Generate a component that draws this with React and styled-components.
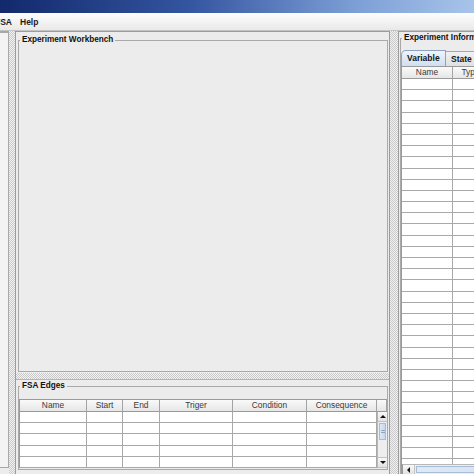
import React from "react";
import styled, { createGlobalStyle } from "styled-components";

const GlobalStyle = createGlobalStyle`
  html, body {
    margin: 0;
    padding: 0;
    background: #ececec;
  }
  body {
    font-family: "Liberation Sans", Arial, sans-serif;
  }
`;

const EDGE_COLS = "67px 36px 37px 73px 74px 70px";
const VAR_COLS = "51px 36px 60px";

const Window = styled.div`
  width: 474px;
  height: 474px;
  overflow: hidden;
  display: flex;
  flex-direction: column;
  background: #ececec;
`;

const TitleBar = styled.div`
  flex: none;
  height: 13px;
  background: linear-gradient(90deg, #12296c 0%, #3455a0 40%, #7d9fd6 75%, #a8c4ea 100%);
`;

const MenuBar = styled.div`
  flex: none;
  height: 17px;
  display: flex;
  align-items: center;
  background: linear-gradient(#fdfdfd, #e9e9e9);
  border-bottom: 1px solid #c4c4c4;
`;

const MenuItem = styled.span`
  padding: 0 4px;
  margin-left: ${(p) => (p.$first ? "-9px" : "0")};
  font-size: 8.5px;
  font-weight: bold;
  color: #1c1c1c;
`;

const Body = styled.div`
  flex: 1;
  min-height: 0;
  display: flex;
`;

const LeftPane = styled.div`
  flex: none;
  width: 9px;
  border-top: 1px solid #a6a6a6;
  padding-bottom: 6px;
  display: flex;
  flex-direction: column;
`;

const LeftBox = styled.div`
  flex: 1;
  box-sizing: border-box;
  background: #f3f3f3;
  border-top: 1px solid #a8a8a8;
  border-right: 1px solid #a8a8a8;
  border-bottom: 1px solid #a8a8a8;
`;

const VDivider = styled.div`
  flex: none;
  width: ${(p) => p.$w}px;
  background: repeating-conic-gradient(#c9c9c9 0 25%, #f2f2f2 0 50%) 0 0 / 2px 2px;
`;

const HDivider = styled.div`
  flex: none;
  height: 6px;
  background: repeating-conic-gradient(#c9c9c9 0 25%, #f2f2f2 0 50%) 0 0 / 2px 2px;
`;

const CenterColumn = styled.div`
  flex: none;
  width: 375px;
  box-sizing: border-box;
  border: 1px solid #9c9c9c;
  border-bottom: none;
  display: flex;
  flex-direction: column;
`;

const Panel = styled.div`
  flex: ${(p) => (p.$grow ? 1 : "none")};
  height: ${(p) => (p.$h ? `${p.$h}px` : "auto")};
  min-height: 0;
  box-sizing: border-box;
  padding: ${(p) => p.$pad};
  border-top: ${(p) => (p.$line ? "1px solid #b4b4b4" : "none")};
  display: flex;
  flex-direction: column;
  overflow: hidden;
`;

const Frame = styled.fieldset`
  margin: 0;
  min-width: 0;
  box-sizing: border-box;
  flex: ${(p) => (p.$grow ? 1 : "none")};
  width: ${(p) => (p.$w ? `${p.$w}px` : "auto")};
  padding: ${(p) => p.$pad || "0"};
  border: 1px solid #a9a9a9;
  background: ${(p) => p.$bg || "transparent"};
`;

const Legend = styled.legend`
  padding: 0 2px;
  margin-left: 1px;
  font-size: 8.2px;
  line-height: 10px;
  font-weight: bold;
  color: #111;
  white-space: nowrap;
`;

const ScrollPane = styled.div`
  height: ${(p) => p.$h}px;
  display: flex;
  flex-direction: column;
  border-left: 1px solid #9a9a9a;
  background: #ffffff;
  overflow: hidden;
`;

const HeaderRow = styled.div`
  flex: none;
  display: grid;
  grid-template-columns: ${(p) => p.$cols};
  height: 12px;
  border-top: 1px solid #9a9a9a;
  background: linear-gradient(#fafafa, #e4e4e4);
`;

const HeaderCell = styled.div`
  box-sizing: border-box;
  border-right: 1px solid #a3a3a3;
  border-bottom: 1px solid #9a9a9a;
  font-size: 8.4px;
  line-height: 11px;
  text-align: center;
  color: #3a3a3a;
  white-space: nowrap;
  overflow: hidden;
`;

const BodyArea = styled.div`
  flex: 1;
  min-height: 0;
  display: flex;
`;

const Rows = styled.div`
  flex: 1;
  min-width: 0;
  overflow: hidden;
`;

const Row = styled.div`
  display: grid;
  grid-template-columns: ${(p) => p.$cols};
  height: 11.2px;
`;

const Cell = styled.div`
  box-sizing: border-box;
  border-right: 1px solid #a8a8a8;
  border-bottom: 1px solid #a8a8a8;
  background: #fff;
`;

const VScroll = styled.div`
  flex: none;
  width: 10px;
  display: flex;
  flex-direction: column;
  background: #eeeeee;
  border-left: 1px solid #b8b8b8;
  box-sizing: border-box;
`;

const HScroll = styled.div`
  flex: none;
  height: 9px;
  display: flex;
  background: #eeeeee;
  border-top: 1px solid #b8b8b8;
  border-left: 1px solid #9a9a9a;
`;

const ArrowButton = styled.div`
  flex: none;
  width: ${(p) => (p.$horizontal ? "11px" : "auto")};
  height: ${(p) => (p.$horizontal ? "auto" : "9px")};
  display: flex;
  align-items: center;
  justify-content: center;
  background: linear-gradient(#f8f8f8, #e2e2e2);
  border-bottom: ${(p) => (p.$horizontal ? "none" : "1px solid #c2c2c2")};
  border-top: ${(p) => (p.$down ? "1px solid #c2c2c2" : "none")};
  border-right: ${(p) => (p.$horizontal ? "1px solid #c2c2c2" : "none")};
`;

const Thumb = styled.div`
  flex: ${(p) => (p.$grow ? 1 : "none")};
  height: ${(p) => (p.$h ? `${p.$h}px` : "auto")};
  margin: ${(p) => (p.$horizontal ? "1px 0 1px 1px" : "1px 1px 0 1px")};
  box-sizing: border-box;
  border: 1px solid #a8bcd6;
  background: linear-gradient(90deg, #dfe9f6, #c6d7ee);
  display: flex;
  align-items: center;
  justify-content: center;
`;

const Grip = styled.div`
  width: 4px;
  height: 4px;
  background: repeating-linear-gradient(#8ea6c8 0 1px, transparent 1px 2px);
`;

const Track = styled.div`
  flex: 1;
`;

const RightPane = styled.div`
  flex: 1;
  min-width: 0;
  border-top: 1px solid #9c9c9c;
  border-left: 1px solid #9c9c9c;
  padding: 1px 0 0 1px;
  overflow: hidden;
`;

const TabStrip = styled.div`
  display: flex;
  height: 16px;
  align-items: flex-end;
`;

const Tab = styled.div`
  flex: none;
  box-sizing: border-box;
  width: ${(p) => p.$w}px;
  height: ${(p) => (p.$active ? 16 : 15)}px;
  padding-left: ${(p) => (p.$active ? 5 : 5)}px;
  font-size: 8.5px;
  font-weight: bold;
  line-height: 14px;
  color: #151515;
  border: 1px solid ${(p) => (p.$active ? "#8ea2be" : "#a6a6a6")};
  border-bottom: none;
  border-left-width: ${(p) => (p.$active ? 1 : 0)}px;
  border-radius: ${(p) => (p.$active ? "5px 0 0 0" : "0")};
  background: ${(p) =>
    p.$active
      ? "linear-gradient(#eef4fb, #cfdff2)"
      : "linear-gradient(#f1f1f1, #e0e0e0)"};
  white-space: nowrap;
`;

const DownIcon = ({ dir }) => {
  const pts = {
    up: "0,4 3,1 6,4",
    down: "0,1 3,4 6,1",
    left: "4,0 1,3 4,6",
  }[dir];
  return (
    <svg width={dir === "left" ? 5 : 6} height={dir === "left" ? 6 : 5} viewBox={dir === "left" ? "0 0 5 6" : "0 0 6 5"}>
      <polygon points={pts} fill="#111" />
    </svg>
  );
};

const edgeHeaders = ["Name", "Start", "End", "Triger", "Condition", "Consequence"];
const varHeaders = ["Name", "Type", "Value"];

const EmptyRows = ({ count, cols, n }) =>
  Array.from({ length: count }).map((_, i) => (
    <Row key={i} $cols={cols}>
      {Array.from({ length: n }).map((__, j) => (
        <Cell key={j} />
      ))}
    </Row>
  ));

const App = () => {
  return (
    <>
      <GlobalStyle />
      <Window>
        <TitleBar />
        <MenuBar>
          <MenuItem $first>FSA</MenuItem>
          <MenuItem>Help</MenuItem>
        </MenuBar>
        <Body>
          <LeftPane>
            <LeftBox />
          </LeftPane>
          <VDivider $w={6} />
          <CenterColumn>
            <Panel $h={341} $pad="3px 1px 1px 2px">
              <Frame $grow>
                <Legend>Experiment Workbench</Legend>
              </Frame>
            </Panel>
            <HDivider />
            <Panel $grow $line $pad="1px 1px 0 2px">
              <Frame $pad="8px 0 1px 0">
                <Legend>FSA Edges</Legend>
                <ScrollPane $h={69}>
                  <HeaderRow $cols={EDGE_COLS + " 10px"}>
                    {edgeHeaders.map((h) => (
                      <HeaderCell key={h}>{h}</HeaderCell>
                    ))}
                    <HeaderCell />
                  </HeaderRow>
                  <BodyArea>
                    <Rows>
                      <EmptyRows count={6} cols={EDGE_COLS} n={6} />
                    </Rows>
                    <VScroll>
                      <ArrowButton>
                        <DownIcon dir="up" />
                      </ArrowButton>
                      <Thumb $h={17}>
                        <Grip />
                      </Thumb>
                      <Track />
                      <ArrowButton $down>
                        <DownIcon dir="down" />
                      </ArrowButton>
                    </VScroll>
                  </BodyArea>
                </ScrollPane>
              </Frame>
            </Panel>
          </CenterColumn>
          <VDivider $w={8} />
          <RightPane>
            <Frame $w={220} $pad="7px 0 0 0">
              <Legend>Experiment Information</Legend>
              <TabStrip>
                <Tab $active $w={45}>Variable</Tab>
                <Tab $w={50}>State</Tab>
              </TabStrip>
              <ScrollPane $h={408}>
                <HeaderRow $cols={VAR_COLS}>
                  {varHeaders.map((h) => (
                    <HeaderCell key={h}>{h}</HeaderCell>
                  ))}
                </HeaderRow>
                <BodyArea>
                  <Rows>
                    <EmptyRows count={35} cols={VAR_COLS} n={3} />
                  </Rows>
                </BodyArea>
                <HScroll>
                  <ArrowButton $horizontal>
                    <DownIcon dir="left" />
                  </ArrowButton>
                  <Thumb $grow $horizontal />
                </HScroll>
              </ScrollPane>
            </Frame>
          </RightPane>
        </Body>
      </Window>
    </>
  );
};

export default App;
